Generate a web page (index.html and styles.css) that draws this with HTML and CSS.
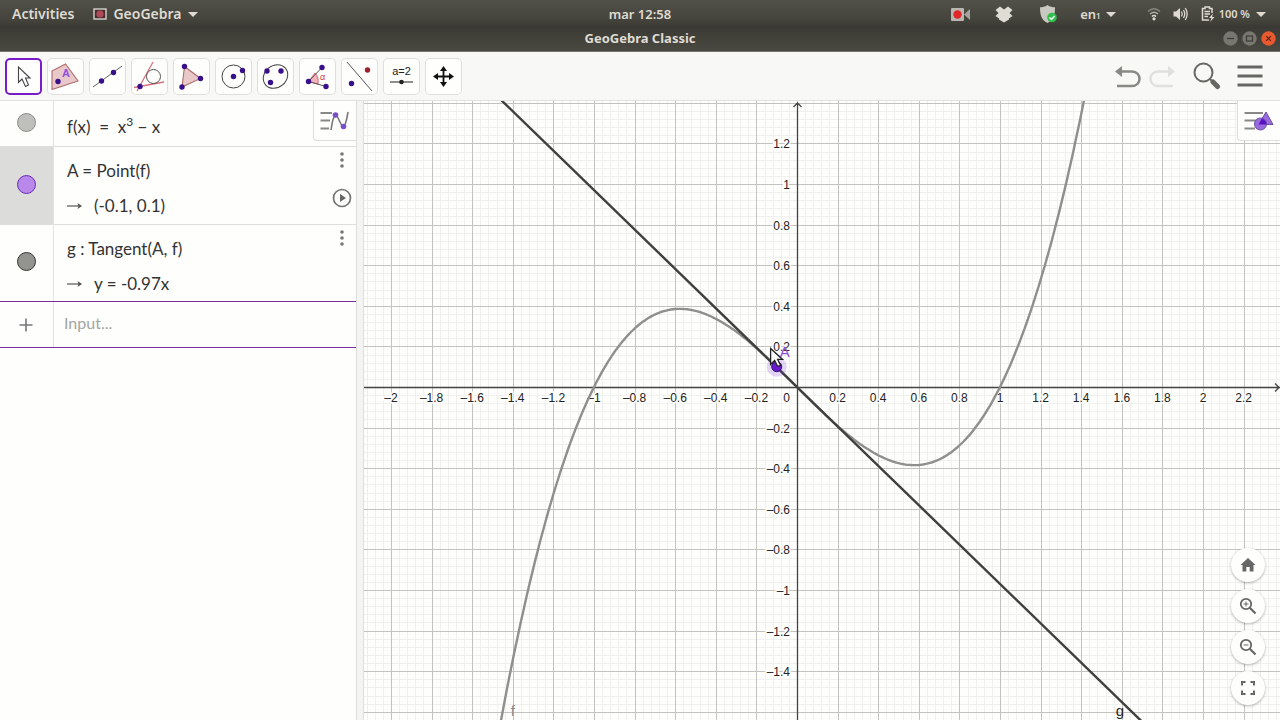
FILE: index.html
```
<!DOCTYPE html>
<html lang="en">
<head>
    <meta charset="UTF-8">
    <meta name="viewport" content="width=device-width, initial-scale=1.0">
    <title>GeoGebra Classic</title>
    <link rel="stylesheet" href="styles.css">
</head>
<body>
    <div class="desktop">
        <div class="topbar">
            <div class="top-left">
                <button class="top-item">Activities</button>
                <button class="top-item app-menu">
                    <svg width="14" height="12" viewBox="0 0 14 12"><rect x="1" y="1" width="12" height="10" fill="#4a2f30" stroke="#d5d3cc" stroke-width="1.4"/><circle cx="7" cy="6" r="3.6" fill="#b04a56"/></svg>
                    GeoGebra
                    <span class="caret"></span>
                </button>
            </div>
            <div class="clock">mar 12:58</div>
            <div class="top-right">
                <svg class="rec" width="20" height="15" viewBox="0 0 20 15"><rect x="0" y="1" width="13" height="13" rx="1" fill="#b9b6b2"/><path d="M13 7.500L19 2V13Z" fill="#a5a49e"/><circle cx="6.500" cy="7.500" r="4.200" fill="#e02626"/></svg>
                <svg class="box" width="18" height="17" viewBox="0 0 18 17"><path d="M5 0.500L9 3.500L13 0.500L17.500 4L14.500 7L17.500 10L14 12.500V13.500L9 16.500L4 13.500V12.500L0.500 10L3.500 7L0.500 4Z" fill="#dfddd4"/></svg>
                <svg class="shield" width="18" height="20" viewBox="0 0 18 20"><path d="M8.500 1C11 3 13.500 3.200 16 3.200C16 11 14.500 16 8.500 19C2.500 16 1 11 1 3.200C3.500 3.200 6 3 8.500 1Z" fill="#c9c9c2"/><circle cx="13" cy="13.500" r="4.800" fill="#2fbf4b"/><path d="M10.500 13.500L12.500 15.500L15.500 12" fill="none" stroke="#fff" stroke-width="1.400"/></svg>
                <button class="top-item lang">en<small>1</small><span class="caret"></span></button>
                <svg class="wifi" width="14" height="14" viewBox="0 0 14 14"><g fill="none" stroke-width="1.500"><path d="M1 4.500Q7 -1 13 4.500" stroke="#85847c"/><path d="M3 7Q7 3.500 11 7" stroke="#aaa9a1"/><path d="M5 9.500Q7 7.500 9 9.500" stroke="#dfdbd2"/></g><circle cx="7" cy="11.800" r="1.600" fill="#dfdbd2"/></svg>
                <svg class="sound" width="15" height="14" viewBox="0 0 15 14"><path d="M0.500 4.500H3L7 1V13L3 9.500H0.500Z" fill="#dfdbd2"/><g fill="none" stroke="#dfdbd2" stroke-width="1.300"><path d="M8.500 4.500Q10 7 8.500 9.500"/><path d="M10.500 3Q13 7 10.500 11"/><path d="M12.300 1Q16 7 12.300 13"/></g></svg>
                <button class="top-item battery">
                    <svg width="14" height="16" viewBox="0 0 14 16"><path d="M8 14H1.500V2.500H4V1H8.500V2.500H11V7" fill="none" stroke="#dfdbd2" stroke-width="1.500"/><path d="M3.500 5.500H9M3.500 8H9M3.500 10.500H7" stroke="#dfdbd2" stroke-width="1.500"/><path d="M12 7.500L8 12H10.500L9 16L13.500 11H11Z" fill="#dfdbd2"/></svg>
                    100 %
                    <span class="caret"></span>
                </button>
            </div>
        </div>
        <div class="titlebar">
            <h1>GeoGebra Classic</h1>
            <div class="window-buttons">
                <button aria-label="Minimize"><svg width="15" height="15" viewBox="0 0 15 15"><circle cx="7.500" cy="7.500" r="7.200" fill="#77766f"/><path d="M4 7.500H11" stroke="#3c3b37" stroke-width="1.200"/></svg></button>
                <button aria-label="Maximize"><svg width="15" height="15" viewBox="0 0 15 15"><circle cx="7.500" cy="7.500" r="7.200" fill="#77766f"/><rect x="4.500" y="5" width="6" height="5" fill="none" stroke="#3c3b37" stroke-width="1.200"/></svg></button>
                <button aria-label="Close"><svg width="15" height="15" viewBox="0 0 15 15"><circle cx="7.500" cy="7.500" r="7.200" fill="#e8592f"/><path d="M5.200 5.200L9.800 9.800M9.800 5.200L5.200 9.800" stroke="#5c2412" stroke-width="1.200"/></svg></button>
            </div>
        </div>

        <div class="toolbar">
            <div class="tools">
                <button class="tool active" aria-label="Move"><svg viewBox="0 0 37 37"><path d="M13.500 9V24.500L17 21L20.500 28.500L23.500 27L20.500 20H25Z" fill="#fff" stroke="#444" stroke-width="1.100"/></svg></button>
                <button class="tool" aria-label="Point"><svg viewBox="0 0 37 37"><path d="M5 13L18.500 6L31 23L5 31.500Z" fill="#e8c8c8" stroke="#b06c6c" stroke-width="1.100"/><circle cx="11" cy="23.500" r="2.700" class="dot"/><text x="15" y="19" class="point-name">A</text></svg></button>
                <button class="tool" aria-label="Line"><svg viewBox="0 0 37 37"><path d="M4 29L33 8" stroke="#666"/><circle cx="12.500" cy="23" r="2.700" class="dot"/><circle cx="24.500" cy="14.500" r="2.700" class="dot"/></svg></button>
                <button class="tool" aria-label="Tangents"><svg viewBox="0 0 37 37"><path d="M6 33L22 4M3 29.500L33 24" stroke="#d97080" stroke-width="1.300"/><circle cx="22.500" cy="18.500" r="7" fill="none" stroke="#555"/><circle cx="9" cy="28.500" r="2.700" class="dot"/></svg></button>
                <button class="tool" aria-label="Polygon"><svg viewBox="0 0 37 37"><path d="M11.500 8.500L27.500 20.500L9 29Z" fill="#e8c8c8" stroke="#b06c6c" stroke-width="1.100"/><circle cx="11.500" cy="8.500" r="2.700" class="dot"/><circle cx="27.500" cy="20.500" r="2.700" class="dot"/><circle cx="9" cy="29" r="2.700" class="dot"/></svg></button>
                <button class="tool" aria-label="Circle with center"><svg viewBox="0 0 37 37"><circle cx="18.500" cy="18.500" r="11.500" fill="none" stroke="#444"/><circle cx="18.500" cy="18.500" r="2.700" class="dot"/><circle cx="27.500" cy="12.500" r="2.700" class="dot"/></svg></button>
                <button class="tool" aria-label="Ellipse"><svg viewBox="0 0 37 37"><ellipse cx="18.500" cy="18.500" rx="13" ry="11" transform="rotate(-40 18.500 18.500)" fill="none" stroke="#444"/><circle cx="10" cy="13" r="2.700" class="dot"/><circle cx="24" cy="13" r="2.700" class="dot"/><circle cx="13.500" cy="24.500" r="2.700" class="dot"/></svg></button>
                <button class="tool" aria-label="Angle"><svg viewBox="0 0 37 37"><path d="M9.500 23.500L16 15Q20 19 19 26Z" fill="#f3b3ba" stroke="#dc6676"/><path d="M23 9.500L9.500 23.500L27 28.500" fill="none" stroke="#555"/><circle cx="23" cy="9.500" r="2.700" class="dot"/><circle cx="9.500" cy="23.500" r="2.700" class="dot"/><circle cx="27" cy="28.500" r="2.700" class="dot"/><text x="21" y="22" class="alpha">α</text></svg></button>
                <button class="tool" aria-label="Reflect"><svg viewBox="0 0 37 37"><path d="M6 4L31 33" stroke="#555"/><circle cx="26.500" cy="12" r="2.700" fill="#a01f2c"/><circle cx="10.500" cy="25.500" r="2.700" class="dot"/></svg></button>
                <button class="tool" aria-label="Slider"><svg viewBox="0 0 37 37"><text x="18.500" y="17" class="slider-name">a=2</text><path d="M7 24H30" stroke="#444" stroke-width="1.200"/><circle cx="18.500" cy="24" r="2.300" fill="#222"/></svg></button>
                <button class="tool" aria-label="Move graphics view"><svg viewBox="0 0 37 37"><path d="M18.500 12V25M12 18.500H25" stroke="#111" stroke-width="1.800"/><path d="M18.500 8L22 13H15ZM18.500 29L15 24H22ZM8 18.500L13 15V22ZM29 18.500L24 22V15Z" fill="#111"/></svg></button>
            </div>
            <div class="actions">
                <button aria-label="Undo"><svg width="28" height="24" viewBox="0 0 28 24"><path d="M7 7.500H18C28 7.500 28 22 18 22H3" fill="none" stroke="#888884" stroke-width="2.500"/><path d="M1 7.500L8 2V13Z" fill="#888884"/></svg></button>
                <button aria-label="Redo" disabled><svg width="28" height="24" viewBox="0 0 28 24"><path d="M21 7.500H10C0 7.500 0 22 10 22H25" fill="none" stroke="#e0e0dd" stroke-width="2.500"/><path d="M27 7.500L20 2V13Z" fill="#e0e0dd"/></svg></button>
                <button class="search" aria-label="Search"><svg width="28" height="28" viewBox="0 0 28 28"><circle cx="10.500" cy="10.500" r="9" fill="none" stroke="#666662" stroke-width="2"/><path d="M16.500 16.500L20 20" stroke="#666662" stroke-width="2"/><path d="M20 20L24.500 24.500" stroke="#666662" stroke-width="5" stroke-linecap="round"/></svg></button>
                <button class="menu" aria-label="Menu"><svg width="26" height="22" viewBox="0 0 26 22"><path d="M0.500 2H25.500M0.500 11H25.500M0.500 20H25.500" stroke="#666662" stroke-width="3"/></svg></button>
            </div>
        </div>

        <div class="views">
            <div class="algebra">
                <div class="row">
                    <div class="toggle"><button class="marble light" aria-label="Show f"></button></div>
                    <div class="expr"><p>f(x)&nbsp; = &nbsp;x<sup>3</sup> − x</p></div>
                </div>
                <div class="row">
                    <div class="toggle selected"><button class="marble purple" aria-label="Show A"></button></div>
                    <div class="expr">
                        <p>A = Point(f)</p>
                        <p class="result"><svg class="arrow" width="16" height="8" viewBox="0 0 16 8"><path d="M0 4H14" stroke="#555" stroke-width="1.200"/><path d="M10.500 1L15 4L10.500 7L11.500 4Z" fill="#555"/></svg>(-0.1, 0.1)</p>
                    </div>
                    <div class="row-buttons">
                        <button aria-label="More"><svg width="4" height="16" viewBox="0 0 4 16"><path d="M2 2H2.010M2 8H2.010M2 14H2.010" stroke="#777" stroke-width="3.600" stroke-linecap="round"/></svg></button>
                        <button aria-label="Play"><svg width="20" height="20" viewBox="0 0 20 20"><circle cx="10" cy="10" r="8.500" fill="none" stroke="#737370" stroke-width="1.700"/><path d="M8 6L14 10L8 14Z" fill="#666"/></svg></button>
                    </div>
                </div>
                <div class="row">
                    <div class="toggle"><button class="marble dark" aria-label="Show g"></button></div>
                    <div class="expr">
                        <p>g : Tangent(A, f)</p>
                        <p class="result"><svg class="arrow" width="16" height="8" viewBox="0 0 16 8"><path d="M0 4H14" stroke="#555" stroke-width="1.200"/><path d="M10.500 1L15 4L10.500 7L11.500 4Z" fill="#555"/></svg>y = -0.97x</p>
                    </div>
                    <div class="row-buttons">
                        <button aria-label="More"><svg width="4" height="16" viewBox="0 0 4 16"><path d="M2 2H2.010M2 8H2.010M2 14H2.010" stroke="#777" stroke-width="3.600" stroke-linecap="round"/></svg></button>
                    </div>
                </div>
                <div class="row input-row">
                    <label class="toggle" for="expression" aria-label="Add expression"><svg width="14" height="14" viewBox="0 0 14 14"><path d="M7 0.500V13.500M0.500 7H13.500" stroke="#777" stroke-width="1.600"/></svg></label>
                    <input type="text" id="expression" name="expression" placeholder="Input...">
                </div>
                <button class="style-toggle" aria-label="Algebra style bar"><svg width="30" height="22" viewBox="0 0 30 22"><path d="M0.500 3H12M0.500 10.500H10M0.500 18.500H9" stroke="#888" stroke-width="2"/><path d="M11 20Q13 6 15.500 5C18 5 21 17 23.500 17C26 15 27 8 28 2" fill="none" stroke="#777" stroke-width="1.600"/><circle cx="15.500" cy="5" r="2.800" fill="#7a50c8"/><circle cx="23.500" cy="16.500" r="2.800" fill="#7a50c8"/></svg></button>
            </div>
            <div class="graphics">
                <svg id="plot" class="plot"></svg>
                <button class="style-toggle" aria-label="Graphics style bar"><svg width="30" height="22" viewBox="0 0 30 22"><path d="M0.500 3H19M0.500 10.500H14M0.500 18.500H11" stroke="#888" stroke-width="2"/><path d="M22 2L29 14.500H14.500Z" fill="#9a6be0" stroke="#6a4fa0"/><circle cx="16.500" cy="14" r="6" fill="#9a6be0" stroke="#6a4fa0"/><path d="M18 8.500Q23 11 22.300 14.500H14.500Z" fill="#5a12c0"/></svg></button>
                <div class="zoom-buttons">
                    <button aria-label="Standard view"><svg width="16" height="16" viewBox="0 0 16 16"><path d="M8 1L15.500 8H13.500V14.500H9.700V10H6.300V14.500H2.500V8H0.500Z" fill="#666"/></svg></button>
                    <button aria-label="Zoom in"><svg width="18" height="18" viewBox="0 0 18 18"><circle cx="7" cy="7" r="5.200" fill="none" stroke="#666" stroke-width="1.800"/><path d="M10.800 10.800L16.500 16.500" stroke="#666" stroke-width="2.200"/><path d="M7 4.500V9.500M4.500 7H9.500" stroke="#666"/></svg></button>
                    <button aria-label="Zoom out"><svg width="18" height="18" viewBox="0 0 18 18"><circle cx="7" cy="7" r="5.200" fill="none" stroke="#666" stroke-width="1.800"/><path d="M10.800 10.800L16.500 16.500" stroke="#666" stroke-width="2.200"/><path d="M4.500 7H9.500" stroke="#666"/></svg></button>
                    <button aria-label="Fullscreen"><svg width="14" height="14" viewBox="0 0 14 14"><path d="M1 4.500V1H4.500M9.500 1H13V4.500M13 9.500V13H9.500M4.500 13H1V9.500" fill="none" stroke="#666" stroke-width="2"/></svg></button>
                </div>
            </div>
        </div>
    </div>
    <script src="plot.js"></script>
</body>
</html>
```
FILE: styles.css
```
* {
    margin: 0;
    padding: 0;
    box-sizing: border-box;
}
body {
    font-family: "Liberation Sans", Arial, sans-serif;
    background-color: #fefefc;
}
button {
    border: none;
    background: none;
    font: inherit;
    color: inherit;
    cursor: pointer;
}
svg {
    display: block;
    flex-shrink: 0;
}
.desktop {
    height: 100vh;
    display: flex;
    flex-direction: column;
    overflow: hidden;
}

/* system bar */
.topbar {
    height: 27px;
    display: grid;
    grid-template-columns: 1fr auto 1fr;
    align-items: center;
    padding: 0 12px 3px;
    background: linear-gradient(#525148, #45443d 70%, #3a3933);
    color: #dfdbd2;
    font-family: "Noto Sans", sans-serif;
    font-size: 13px;
    font-weight: 600;
    line-height: 24px;
}
.top-left, .top-right, .top-item {
    display: flex;
    align-items: center;
}
.top-left {
    gap: 19px;
    font-size: 14px;
}
.app-menu {
    gap: 6px;
}
.top-right {
    justify-content: flex-end;
    padding-right: 2px;
}
.rec {
    margin-right: 24px;
}
.box {
    margin-right: 26px;
}
.shield {
    margin-right: 23px;
}
.lang {
    margin-right: 31px;
}
.lang small {
    font-size: 8px;
    padding-top: 4px;
    margin-right: 5px;
}
.wifi {
    margin-right: 12px;
}
.sound {
    margin-right: 13px;
}
.battery {
    gap: 4px;
    font-size: 11px;
}
.battery .caret {
    margin-left: 2px;
}
.caret {
    border: 5px solid transparent;
    border-top-color: #dfdbd2;
    border-bottom: none;
}
.titlebar {
    height: 25px;
    display: grid;
    grid-template-columns: 1fr auto 1fr;
    align-items: center;
    padding: 0 4px 2px;
    background: linear-gradient(#3a3933, #4a4941);
    border-bottom: 1px solid #77766e;
    color: #dfdbd2;
}
.titlebar h1 {
    grid-column: 2;
    font-family: "Noto Sans", sans-serif;
    font-size: 13px;
    font-weight: 700;
}
.window-buttons {
    display: flex;
    justify-content: flex-end;
    gap: 4px;
}

/* tools */
.toolbar {
    height: 49px;
    display: flex;
    justify-content: space-between;
    align-items: center;
    padding: 0 17px 0 5px;
    background-color: #f8f8f6;
    border-bottom: 1px solid #e2e2df;
}
.tools {
    display: flex;
    gap: 5px;
}
.tool {
    width: 37px;
    height: 37px;
    border-radius: 5px;
    background-color: #fefefc;
    box-shadow: inset 0 0 0 1px #dededb;
}
.tool.active {
    box-shadow: inset 0 0 0 2px #7a1bc9;
}
.dot {
    fill: #38108c;
}
.point-name {
    font-size: 11px;
    font-weight: bold;
    fill: #8f4fe0;
}
.alpha {
    font-size: 9px;
    fill: #cf3347;
}
.slider-name {
    font-size: 11px;
    text-anchor: middle;
    fill: #222;
}
.actions {
    display: flex;
    align-items: center;
    gap: 6px;
}
.search {
    margin-left: 11px;
}
.menu {
    margin-left: 10px;
}

/* views */
.views {
    flex: 1;
    min-height: 0;
    display: flex;
}
.algebra {
    position: relative;
    width: 357px;
    border-right: 1px solid #dededb;
    background-color: #fefefc;
}
.row {
    display: flex;
    border-bottom: 1px solid #dededb;
}
.toggle {
    width: 54px;
    display: flex;
    justify-content: center;
    align-items: center;
    padding-right: 1px;
    padding-bottom: 3px;
    border-right: 1px solid #e2e2df;
}
.toggle.selected {
    background-color: #dcdcda;
}
.marble {
    width: 19px;
    height: 19px;
    border-radius: 50%;
    border: 1px solid #777;
}
.light {
    background-color: #bfbfbc;
    border-color: #8c8c89;
}
.purple {
    background-color: #b888ea;
    border-color: #6a2cb8;
}
.dark {
    background-color: #939390;
    border-color: #333;
}
.expr {
    flex: 1;
    padding: 6px 0 1px 13px;
    font-family: Lato, sans-serif;
    font-size: 17px;
    line-height: 35px;
    color: #333;
}
.row:first-child .expr {
    padding-top: 8px;
    padding-bottom: 2px;
}
.expr sup {
    font-size: 12px;
    line-height: 0;
}
.result {
    display: flex;
    align-items: center;
    gap: 11px;
}
.row-buttons {
    width: 28px;
    display: flex;
    flex-direction: column;
    align-items: center;
    gap: 20px;
    padding-top: 5px;
}
.row:nth-child(3) {
    border-bottom: none;
}
.row:nth-child(3) .expr {
    padding-bottom: 0;
}
.input-row {
    height: 47px;
    border-top: 1px solid #7d2ba3;
    border-bottom: 1px solid #7d2ba3;
}
.input-row .toggle {
    padding-bottom: 0;
}
.input-row input {
    flex: 1;
    min-width: 0;
    padding: 0 10px 4px;
    border: none;
    outline: none;
    background: none;
    font-family: Lato, sans-serif;
    font-size: 16px;
}
.input-row input::placeholder {
    color: #a5a5a2;
}
.style-toggle {
    position: absolute;
    top: 0;
    right: 0;
    width: 43px;
    height: 40px;
    display: flex;
    justify-content: center;
    align-items: center;
    background-color: #fefefc;
    border: 1px solid #dededb;
    border-top: none;
    border-right: none;
    border-bottom-left-radius: 4px;
}
.graphics {
    position: relative;
    flex: 1;
    min-width: 0;
    border-left: 6px solid #f4f4f2;
}
.plot {
    width: 100%;
    height: 100%;
    border-left: 1px solid #dededb;
}
.zoom-buttons {
    position: absolute;
    right: 15px;
    bottom: 15px;
    display: flex;
    flex-direction: column;
    gap: 7px;
}
.zoom-buttons button {
    width: 34px;
    height: 34px;
    display: flex;
    justify-content: center;
    align-items: center;
    border-radius: 50%;
    background-color: #fefefc;
    box-shadow: 0 1px 3px rgba(0, 0, 0, .3);
}

/* plot */
.minor {
    stroke: #f0f0ee;
}
.major {
    stroke: #c3c3c0;
}
.axis {
    stroke: #444;
    stroke-width: 1.3;
    fill: none;
}
.curve {
    stroke: #8f8f8c;
    stroke-width: 2.4;
    fill: none;
}
.tangent {
    stroke: #3f3f3d;
    stroke-width: 2.4;
}
.tick {
    font-size: 12px;
    fill: #222;
    stroke: #fefefc;
    stroke-width: 3px;
    paint-order: stroke;
}
.name {
    font-size: 15px;
    fill: #222;
}
.name-f {
    fill: #888;
}
.name-a {
    fill: #8f4fe0;
}
.halo {
    fill: #7b2be0;
    opacity: .2;
}
.point {
    fill: #6a1bd0;
    stroke: #31106a;
}
.cursor {
    fill: #fff;
    stroke: #222;
    stroke-width: 1.3;
}
```
FILE: plot.js
```
const plot = document.getElementById("plot");
const unit = 203;
const origin = { x: 433, y: 286 };

function add(tag, attrs, text) {
    const el = document.createElementNS("http://www.w3.org/2000/svg", tag);
    for (const key in attrs) {
        el.setAttribute(key, attrs[key]);
    }
    if (text) {
        el.textContent = text;
    }
    plot.appendChild(el);
}

function px(x) {
    return origin.x + x * unit;
}

function py(y) {
    return origin.y - y * unit;
}

function gridLines(step, cls, w, h) {
    for (let i = Math.ceil(-origin.x / unit / step); px(i * step) < w; i++) {
        const x = Math.round(px(i * step)) + 0.5;
        add("line", { x1: x, x2: x, y1: 0, y2: h, class: cls });
    }
    for (let i = Math.floor(origin.y / unit / step); py(i * step) < h; i--) {
        const y = Math.round(py(i * step)) + 0.5;
        add("line", { x1: 0, x2: w, y1: y, y2: y, class: cls });
    }
}

function label(i) {
    return (i < 0 ? "–" : "") + Math.abs(i) / 5;
}

function draw() {
    const w = plot.clientWidth;
    const h = plot.clientHeight;
    plot.innerHTML = "";

    gridLines(0.04, "minor", w, h);
    gridLines(0.2, "major", w, h);

    // axes with arrow heads
    const ax = origin.x + 0.5;
    const ay = origin.y + 0.5;
    add("path", { d: `M0 ${ay}H${w}M${w - 5} ${ay - 4}L${w - 1} ${ay}L${w - 5} ${ay + 4}`, class: "axis" });
    add("path", { d: `M${ax} ${h}V2M${ax - 4} 6L${ax} 2L${ax + 4} 6`, class: "axis" });

    for (let i = -10; px(i / 5) < w - 20; i++) {
        if (i !== 0) {
            add("text", { x: px(i / 5), y: origin.y + 15, "text-anchor": "middle", class: "tick" }, label(i));
        }
    }
    add("text", { x: origin.x - 7, y: origin.y + 15, "text-anchor": "end", class: "tick" }, "0");
    for (let i = 6; py(i / 5) < h - 20; i--) {
        if (i !== 0) {
            add("text", { x: origin.x - 7, y: py(i / 5) + 5, "text-anchor": "end", class: "tick" }, label(i));
        }
    }

    // f(x) = x^3 - x
    let d = "";
    for (let x = -1.6; x <= 1.6; x += 0.01) {
        d += (d ? "L" : "M") + px(x).toFixed(1) + " " + py(x * x * x - x).toFixed(1);
    }
    add("path", { d: d, class: "curve" });
    add("line", { x1: px(-2), y1: py(1.94), x2: px(2), y2: py(-1.94), class: "tangent" });

    add("text", { x: px(-1.41), y: py(-1.62), class: "name name-f" }, "f");
    add("text", { x: px(1.57), y: py(-1.62), class: "name" }, "g");

    add("circle", { cx: px(-0.1), cy: py(0.1), r: 10, class: "halo" });
    add("circle", { cx: px(-0.1), cy: py(0.1), r: 5, class: "point" });
    add("text", { x: px(-0.085), y: py(0.15), class: "name name-a" }, "A");
    add("path", { d: "M0 0V16L4 12L7 18L10 17L7 11H12Z", transform: `translate(${px(-0.13)} ${py(0.19)})`, class: "cursor" });
}

draw();
window.addEventListener("resize", draw);
```
